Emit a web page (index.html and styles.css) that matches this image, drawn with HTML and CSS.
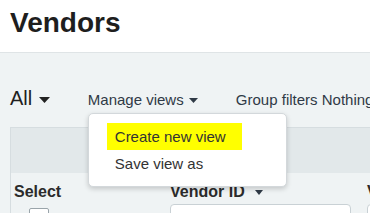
FILE: index.html
```html
<!DOCTYPE html>
<html lang="en">
<head>
<meta charset="UTF-8">
<meta name="viewport" content="width=device-width, initial-scale=1.0">
<title>Vendors</title>
<link rel="stylesheet" href="styles.css">
</head>
<body>

<header class="page-head">
  <h1>Vendors</h1>
</header>

<main class="content">
  <div class="views-bar">
    <button class="view-select">All
      <svg class="caret" width="11" height="6" viewBox="0 0 11 6"><path d="M0 0h11L5.5 6z" fill="#222"/></svg>
    </button>

    <div class="manage">
      <button class="manage-btn">Manage views
        <svg class="caret-sm" width="9" height="5" viewBox="0 0 9 5"><path d="M0 0h9L4.5 5z" fill="#2f3a46"/></svg>
      </button>
      <ul class="menu">
        <li><a class="menu-item active">Create new view</a></li>
        <li><a class="menu-item">Save view as</a></li>
      </ul>
    </div>

    <span class="divider"></span>
    <span class="group-filters">Group filters Nothing selected</span>
  </div>

  <div class="grid">
    <div class="grid-toolbar"></div>
    <div class="grid-head">
      <div class="col col-select">
        <span class="col-label">Select</span>
        <input type="checkbox" class="check">
      </div>
      <div class="col col-id">
        <span class="col-label">Vendor ID
          <svg class="caret-xs" width="8" height="5" viewBox="0 0 8 5"><path d="M0 0h8L4 5z" fill="#2f3a46"/></svg>
        </span>
        <input type="text" class="filter-input">
      </div>
      <div class="col col-name">
        <span class="col-label">Vendor name</span>
        <input type="text" class="filter-input">
      </div>
    </div>
  </div>
</main>

</body>
</html>
```

FILE: styles.css
```css
* {
  box-sizing: border-box;
  font-family: "Liberation Sans", Arial, sans-serif;
}
body {
  margin: 0;
  background: #eff3f4;
  color: #333;
  overflow: hidden;
  white-space: nowrap;
}

.page-head {
  background: #fff;
  height: 53px;
  padding: 7px 10px 0;
  border-bottom: 1px solid #dfe4e6;
}
.page-head h1 {
  margin: 0;
  font-size: 28px;
  line-height: 32px;
  font-weight: bold;
  color: #1e1e1e;
}

.content {
  padding-top: 33px;
}

/* views row */
.views-bar {
  display: flex;
  align-items: baseline;
  height: 30px;
  padding-left: 10px;
}
button {
  background: none;
  border: none;
  padding: 0;
  margin: 0;
  cursor: pointer;
  color: inherit;
}
.view-select {
  font-size: 20px;
  line-height: 24px;
  color: #1f1f1f;
}
.caret {
  vertical-align: middle;
  margin-left: 1px;
}
.manage {
  position: relative;
  margin-left: 38px;
}
.manage-btn {
  font-size: 15px;
  line-height: 18px;
  color: #2f3a46;
}
.caret-sm {
  vertical-align: 2px;
  margin-left: 1px;
}
.divider {
  align-self: center;
  width: 1px;
  height: 27px;
  background: #d8dee1;
  margin-left: 19px;
}
.group-filters {
  font-size: 15px;
  line-height: 18px;
  color: #2f3a46;
  margin-left: 19px;
}

/* dropdown */
.menu {
  position: absolute;
  top: calc(100% + 4px);
  left: 0;
  z-index: 5;
  width: 199px;
  margin: 0;
  padding: 9px 0;
  list-style: none;
  background: #fff;
  border: 1px solid #d3d8db;
  border-radius: 5px;
  box-shadow: 0 2px 5px rgba(0,0,0,0.18);
}
.menu li {
  padding-left: 18px;
}
.menu-item {
  display: inline-block;
  font-size: 15px;
  line-height: 27px;
  padding: 0 16px 0 8px;
  color: #333;
}
.menu-item.active { background: #ffff00; }

/* grid */
.grid {
  margin: 11px 0 0 10px;
  border-left: 1px solid #d6dde0;
}
.grid-toolbar {
  height: 46px;
  background: #e2e8ea;
  border-top: 1px solid #d6dde0;
}
.grid-head {
  display: flex;
  padding-top: 9px;
}
.col {
  display: flex;
  flex-direction: column;
  padding-left: 3px;
  flex-shrink: 0;
}
.col-select { width: 156px; }
.col-id { width: 197px; }
.col-name { width: 200px; }
.col-label {
  font-size: 16px;
  line-height: 20px;
  font-weight: bold;
  color: #2b2b2b;
}
.caret-xs {
  vertical-align: 2px;
  margin-left: 6px;
}
.check {
  appearance: none;
  width: 20px;
  height: 20px;
  margin: 6px 0 0 15px;
  background: #fff;
  border: 1px solid #9aa4aa;
  border-radius: 2px;
}
.filter-input {
  width: 181px;
  height: 30px;
  margin-top: 2px;
  background: #fff;
  border: 1px solid #c9d1d5;
  border-radius: 4px;
}
```
